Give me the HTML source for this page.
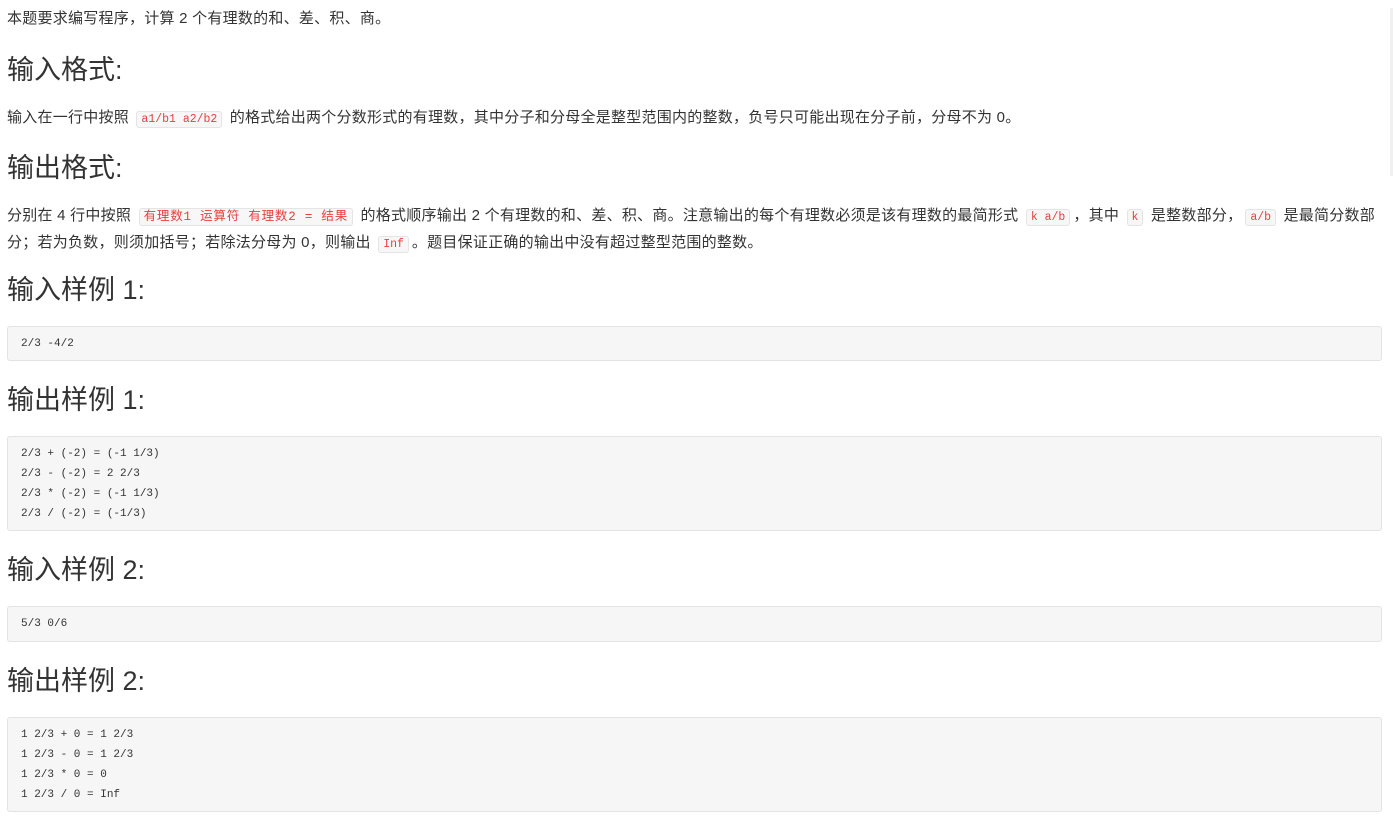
<!DOCTYPE html>
<html><head><meta charset="utf-8"><style>
body{margin:0;width:1393px;height:822px;overflow:hidden;background:#fff;color:#333;font-family:"Liberation Sans","Noto Sans CJK SC",sans-serif;font-size:15px;position:relative}
.a{position:absolute;left:7px;white-space:nowrap}
p.a{margin:0;line-height:25px;letter-spacing:0.25px}
h{position:absolute;left:7px;font-size:27px;line-height:34px;color:#333;white-space:nowrap}
code{font-family:"Liberation Mono","Noto Sans CJK SC",monospace;font-size:11.5px;letter-spacing:0;color:#e83e3e;background:#f7f7f7;border:1px solid #e4e4e4;border-radius:3px;padding:1px 4px;margin:0 3px}
code.w{font-size:12.5px;letter-spacing:0.8px}
pre{position:absolute;left:7px;width:1375px;margin:0;box-sizing:border-box;background:#f6f6f6;border:1px solid #e3e3e3;border-radius:3px;padding:7px 13px;font-family:"Liberation Mono",monospace;font-size:11px;line-height:20px;color:#333}
.sb{position:absolute;left:1390px;top:8px;width:3px;height:168px;background:#f0f0f0}
</style></head><body>
<div class="sb"></div>
<p class="a" style="top:6px">本题要求编写程序，计算 2 个有理数的和、差、积、商。</p>
<h style="top:53px">输入格式:</h>
<p class="a" style="top:105px">输入在一行中按照 <code>a1/b1 a2/b2</code> 的格式给出两个分数形式的有理数，其中分子和分母全是整型范围内的整数，负号只可能出现在分子前，分母不为 0。</p>
<h style="top:151px">输出格式:</h>
<p class="a" style="top:203px">分别在 4 行中按照 <code class="w">有理数1 运算符 有理数2 = 结果</code> 的格式顺序输出 2 个有理数的和、差、积、商。注意输出的每个有理数必须是该有理数的最简形式 <code>k a/b</code>，其中 <code>k</code> 是整数部分，<code>a/b</code> 是最简分数部<br>分；若为负数，则须加括号；若除法分母为 0，则输出 <code>Inf</code>。题目保证正确的输出中没有超过整型范围的整数。</p>
<h style="top:273px">输入样例 1:</h>
<pre style="top:326px;height:35px">2/3 -4/2</pre>
<h style="top:383px">输出样例 1:</h>
<pre style="top:436px;height:95px">2/3 + (-2) = (-1 1/3)
2/3 - (-2) = 2 2/3
2/3 * (-2) = (-1 1/3)
2/3 / (-2) = (-1/3)</pre>
<h style="top:553px">输入样例 2:</h>
<pre style="top:606px;height:36px">5/3 0/6</pre>
<h style="top:664px">输出样例 2:</h>
<pre style="top:717px;height:95px">1 2/3 + 0 = 1 2/3
1 2/3 - 0 = 1 2/3
1 2/3 * 0 = 0
1 2/3 / 0 = Inf</pre>
</body></html>
